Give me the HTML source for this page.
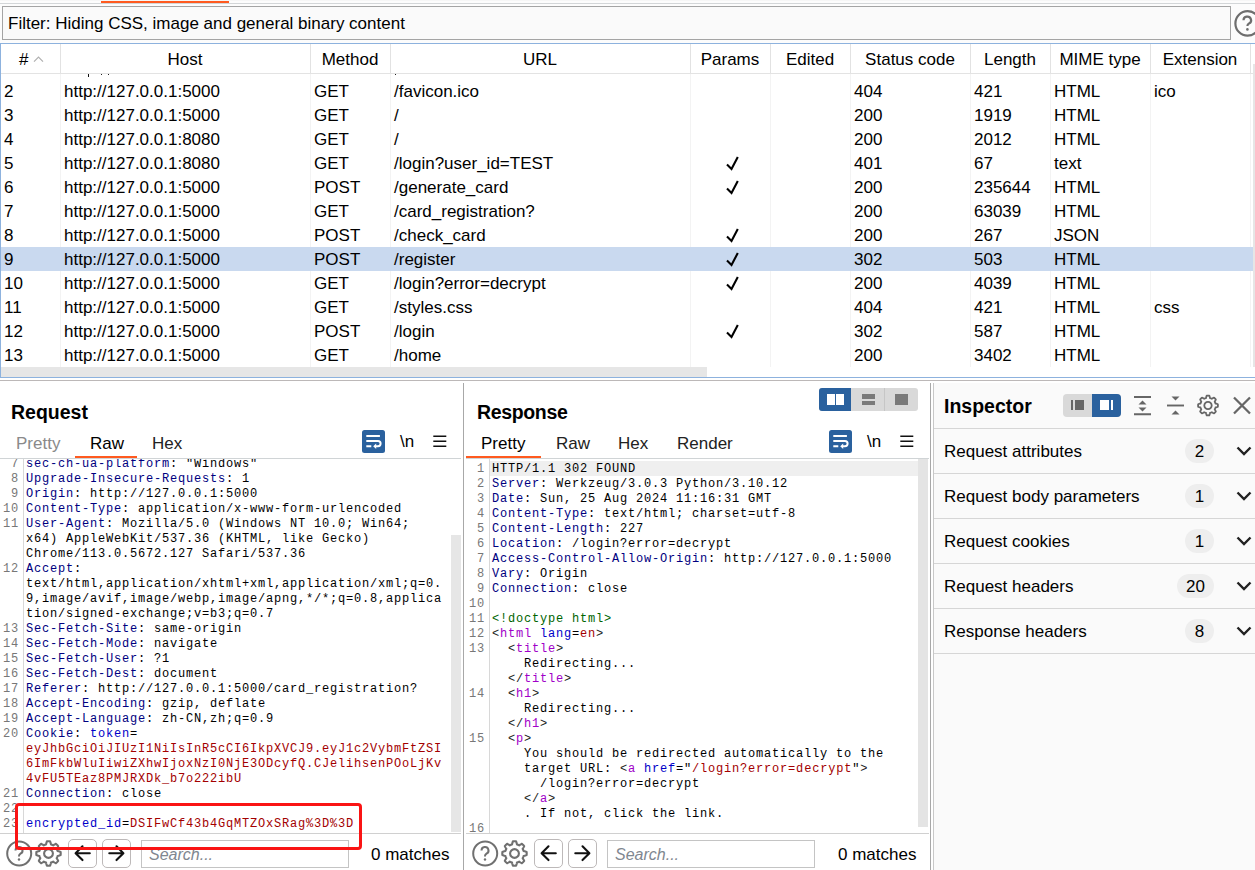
<!DOCTYPE html><html><head><meta charset="utf-8"><style>
*{box-sizing:border-box;margin:0;padding:0}
html,body{width:1255px;height:870px;overflow:hidden;background:#fff}
body{position:relative;font-family:"Liberation Sans",sans-serif;font-size:17px;color:#000}
.a{position:absolute}
.t{position:absolute;white-space:pre;line-height:20px;margin-top:1px}
.b{margin-top:0}
.mono{font-family:"Liberation Mono",monospace;font-size:12px;letter-spacing:0.8px;line-height:15px;white-space:pre}
.hn{color:#000080}
.hv{color:#000}
.ck{color:#0000c8}
.cv{color:#a30000}
.ln{color:#777;text-align:right}
.dt{color:#006400}
.tg{color:#a000c8}
.at{color:#0000c8}
.av{color:#a30000}
.pn{color:#222}
</style></head><body><div class="a" style="left:0;top:0;width:1255px;height:43px;background:#fcfcfc"></div><div class="a" style="left:0;top:0;width:1255px;height:1px;background:#f6f6f6"></div><div class="a" style="left:101px;top:1px;width:128px;height:2px;background:#ff5a1f"></div><div class="a" style="left:0;top:3px;width:1255px;height:1px;background:#d3d6d8"></div><div class="a" style="left:2px;top:6px;width:1229px;height:34px;border:1px solid #a4a4a4;background:#fafafa"></div><div class="t" style="left:8px;top:13px">Filter: Hiding CSS, image and general binary content</div><svg class="a" style="left:1234px;top:10px" width="28" height="28"><circle cx="13.6" cy="13.4" r="12.2" fill="none" stroke="#6e6e6e" stroke-width="2.2"/><path d="M9.5 10.3a3.8 3.6 0 1 1 5.6 3.1c-1.2.7-1.7 1.3-1.7 2.6" fill="none" stroke="#6e6e6e" stroke-width="2.2"/><circle cx="13.4" cy="19.4" r="1.3" fill="#6e6e6e"/></svg><div class="a" style="left:0;top:43px;width:1255px;height:335px;border-top:1px solid #8db2de;border-left:1px solid #8db2de;border-bottom:1px solid #8db2de"></div><div class="a" style="left:1px;top:73px;width:1254px;height:1px;background:#e3e3e3"></div><div class="t" style="left:19px;top:49px">#</div><svg class="a" style="left:33px;top:55px" width="11" height="8"><path d="M1 6.7 L5.5 2.2 L10 6.7" fill="none" stroke="#b0b0b0" stroke-width="1.2"/></svg><div class="a" style="left:60px;top:44px;width:1px;height:29px;background:#e2e2e2"></div><div class="a" style="left:60px;top:74px;width:1px;height:293px;background:#f3f3f3"></div><div class="t" style="left:60px;top:49px;width:250px;text-align:center">Host</div><div class="a" style="left:310px;top:44px;width:1px;height:29px;background:#e2e2e2"></div><div class="a" style="left:310px;top:74px;width:1px;height:293px;background:#f3f3f3"></div><div class="t" style="left:310px;top:49px;width:80px;text-align:center">Method</div><div class="a" style="left:390px;top:44px;width:1px;height:29px;background:#e2e2e2"></div><div class="a" style="left:390px;top:74px;width:1px;height:293px;background:#f3f3f3"></div><div class="t" style="left:390px;top:49px;width:300px;text-align:center">URL</div><div class="a" style="left:690px;top:44px;width:1px;height:29px;background:#e2e2e2"></div><div class="a" style="left:690px;top:74px;width:1px;height:293px;background:#f3f3f3"></div><div class="t" style="left:690px;top:49px;width:80px;text-align:center">Params</div><div class="a" style="left:770px;top:44px;width:1px;height:29px;background:#e2e2e2"></div><div class="a" style="left:770px;top:74px;width:1px;height:293px;background:#f3f3f3"></div><div class="t" style="left:770px;top:49px;width:80px;text-align:center">Edited</div><div class="a" style="left:850px;top:44px;width:1px;height:29px;background:#e2e2e2"></div><div class="a" style="left:850px;top:74px;width:1px;height:293px;background:#f3f3f3"></div><div class="t" style="left:850px;top:49px;width:120px;text-align:center">Status code</div><div class="a" style="left:970px;top:44px;width:1px;height:29px;background:#e2e2e2"></div><div class="a" style="left:970px;top:74px;width:1px;height:293px;background:#f3f3f3"></div><div class="t" style="left:970px;top:49px;width:80px;text-align:center">Length</div><div class="a" style="left:1050px;top:44px;width:1px;height:29px;background:#e2e2e2"></div><div class="a" style="left:1050px;top:74px;width:1px;height:293px;background:#f3f3f3"></div><div class="t" style="left:1050px;top:49px;width:100px;text-align:center">MIME type</div><div class="a" style="left:1150px;top:44px;width:1px;height:29px;background:#e2e2e2"></div><div class="a" style="left:1150px;top:74px;width:1px;height:293px;background:#f3f3f3"></div><div class="t" style="left:1150px;top:49px;width:100px;text-align:center">Extension</div><div class="a" style="left:1250px;top:44px;width:1px;height:29px;background:#e2e2e2"></div><div class="a" style="left:1250px;top:74px;width:1px;height:293px;background:#f3f3f3"></div><div class="a" style="left:1px;top:74px;width:1252px;height:293px;overflow:hidden"><div class="t" style="left:3px;top:-17px">1</div><div class="t" style="left:3px;top:7px">2</div><div class="t" style="left:63px;top:7px">http://127.0.0.1:5000</div><div class="t" style="left:313px;top:7px">GET</div><div class="t" style="left:393px;top:7px">/favicon.ico</div><div class="t" style="left:853px;top:7px">404</div><div class="t" style="left:973px;top:7px">421</div><div class="t" style="left:1053px;top:7px">HTML</div><div class="t" style="left:1153px;top:7px">ico</div><div class="t" style="left:3px;top:31px">3</div><div class="t" style="left:63px;top:31px">http://127.0.0.1:5000</div><div class="t" style="left:313px;top:31px">GET</div><div class="t" style="left:393px;top:31px">/</div><div class="t" style="left:853px;top:31px">200</div><div class="t" style="left:973px;top:31px">1919</div><div class="t" style="left:1053px;top:31px">HTML</div><div class="t" style="left:3px;top:55px">4</div><div class="t" style="left:63px;top:55px">http://127.0.0.1:8080</div><div class="t" style="left:313px;top:55px">GET</div><div class="t" style="left:393px;top:55px">/</div><div class="t" style="left:853px;top:55px">200</div><div class="t" style="left:973px;top:55px">2012</div><div class="t" style="left:1053px;top:55px">HTML</div><div class="t" style="left:3px;top:79px">5</div><div class="t" style="left:63px;top:79px">http://127.0.0.1:8080</div><div class="t" style="left:313px;top:79px">GET</div><div class="t" style="left:393px;top:79px">/login?user_id=TEST</div><svg class="a" style="left:724px;top:81px" width="16" height="17"><path d="M2 9.5 L6.5 14 L12.8 2" fill="none" stroke="#000" stroke-width="2.1"/></svg><div class="t" style="left:853px;top:79px">401</div><div class="t" style="left:973px;top:79px">67</div><div class="t" style="left:1053px;top:79px">text</div><div class="t" style="left:3px;top:103px">6</div><div class="t" style="left:63px;top:103px">http://127.0.0.1:5000</div><div class="t" style="left:313px;top:103px">POST</div><div class="t" style="left:393px;top:103px">/generate_card</div><svg class="a" style="left:724px;top:105px" width="16" height="17"><path d="M2 9.5 L6.5 14 L12.8 2" fill="none" stroke="#000" stroke-width="2.1"/></svg><div class="t" style="left:853px;top:103px">200</div><div class="t" style="left:973px;top:103px">235644</div><div class="t" style="left:1053px;top:103px">HTML</div><div class="t" style="left:3px;top:127px">7</div><div class="t" style="left:63px;top:127px">http://127.0.0.1:5000</div><div class="t" style="left:313px;top:127px">GET</div><div class="t" style="left:393px;top:127px">/card_registration?</div><div class="t" style="left:853px;top:127px">200</div><div class="t" style="left:973px;top:127px">63039</div><div class="t" style="left:1053px;top:127px">HTML</div><div class="t" style="left:3px;top:151px">8</div><div class="t" style="left:63px;top:151px">http://127.0.0.1:5000</div><div class="t" style="left:313px;top:151px">POST</div><div class="t" style="left:393px;top:151px">/check_card</div><svg class="a" style="left:724px;top:153px" width="16" height="17"><path d="M2 9.5 L6.5 14 L12.8 2" fill="none" stroke="#000" stroke-width="2.1"/></svg><div class="t" style="left:853px;top:151px">200</div><div class="t" style="left:973px;top:151px">267</div><div class="t" style="left:1053px;top:151px">JSON</div><div class="a" style="left:0;top:173px;width:1252px;height:24px;background:#c9d9ef"></div><div class="t" style="left:3px;top:175px">9</div><div class="t" style="left:63px;top:175px">http://127.0.0.1:5000</div><div class="t" style="left:313px;top:175px">POST</div><div class="t" style="left:393px;top:175px">/register</div><svg class="a" style="left:724px;top:177px" width="16" height="17"><path d="M2 9.5 L6.5 14 L12.8 2" fill="none" stroke="#000" stroke-width="2.1"/></svg><div class="t" style="left:853px;top:175px">302</div><div class="t" style="left:973px;top:175px">503</div><div class="t" style="left:1053px;top:175px">HTML</div><div class="t" style="left:3px;top:199px">10</div><div class="t" style="left:63px;top:199px">http://127.0.0.1:5000</div><div class="t" style="left:313px;top:199px">GET</div><div class="t" style="left:393px;top:199px">/login?error=decrypt</div><svg class="a" style="left:724px;top:201px" width="16" height="17"><path d="M2 9.5 L6.5 14 L12.8 2" fill="none" stroke="#000" stroke-width="2.1"/></svg><div class="t" style="left:853px;top:199px">200</div><div class="t" style="left:973px;top:199px">4039</div><div class="t" style="left:1053px;top:199px">HTML</div><div class="t" style="left:3px;top:223px">11</div><div class="t" style="left:63px;top:223px">http://127.0.0.1:5000</div><div class="t" style="left:313px;top:223px">GET</div><div class="t" style="left:393px;top:223px">/styles.css</div><div class="t" style="left:853px;top:223px">404</div><div class="t" style="left:973px;top:223px">421</div><div class="t" style="left:1053px;top:223px">HTML</div><div class="t" style="left:1153px;top:223px">css</div><div class="t" style="left:3px;top:247px">12</div><div class="t" style="left:63px;top:247px">http://127.0.0.1:5000</div><div class="t" style="left:313px;top:247px">POST</div><div class="t" style="left:393px;top:247px">/login</div><svg class="a" style="left:724px;top:249px" width="16" height="17"><path d="M2 9.5 L6.5 14 L12.8 2" fill="none" stroke="#000" stroke-width="2.1"/></svg><div class="t" style="left:853px;top:247px">302</div><div class="t" style="left:973px;top:247px">587</div><div class="t" style="left:1053px;top:247px">HTML</div><div class="t" style="left:3px;top:271px">13</div><div class="t" style="left:63px;top:271px">http://127.0.0.1:5000</div><div class="t" style="left:313px;top:271px">GET</div><div class="t" style="left:393px;top:271px">/home</div><div class="t" style="left:853px;top:271px">200</div><div class="t" style="left:973px;top:271px">3402</div><div class="t" style="left:1053px;top:271px">HTML</div></div><div class="a" style="left:87.5px;top:74px;width:1.4px;height:2.5px;background:#111"></div><div class="a" style="left:100.5px;top:74px;width:1.3px;height:1.3px;background:#222"></div><div class="a" style="left:107.5px;top:74px;width:1.3px;height:1.3px;background:#222"></div><div class="a" style="left:394.5px;top:74px;width:1.3px;height:1.3px;background:#222"></div><div class="a" style="left:1px;top:367px;width:1252px;height:10px;background:#fff"></div><div class="a" style="left:1px;top:367px;width:706px;height:10px;background:#e6e6e6"></div><div class="a" style="left:1253px;top:64px;width:2px;height:303px;background:#e6e6e6"></div><div class="a" style="left:0;top:380px;width:1255px;height:1px;background:#bcb8b8"></div><div class="t" style="left:11px;top:400px;font-weight:bold;font-size:19.5px;line-height:22px">Request</div><div class="t" style="left:16px;top:433px;color:#8a8a8a">Pretty</div><div class="t" style="left:90px;top:433px">Raw</div><div class="t" style="left:152px;top:433px;color:#222">Hex</div><div class="a" style="left:75px;top:456px;width:62px;height:2px;background:#ff5a1f"></div><div class="a" style="left:0;top:458px;width:461px;height:1px;background:#d0d4d6"></div><div class="a" style="left:463px;top:383px;width:1px;height:487px;background:#a8a8a8"></div><div class="a" style="left:362px;top:430px;width:23px;height:23px;background:#2a619e;border-radius:2.5px"></div><svg class="a" style="left:362px;top:430px" width="23" height="23"><path d="M4.3 6h13.6M4.3 11H16a2.6 2.6 0 0 1 0 5.2h-2.5M4.3 16.2h5" fill="none" stroke="#fff" stroke-width="2"/><path d="M14.2 13.4L11.2 16.2L14.2 19z" fill="#fff"/></svg><div class="t" style="left:400px;top:431px;font-size:17px">\n</div><svg class="a" style="left:433px;top:434px" width="14" height="14"><path d="M0.3 2.3h13M0.3 7.3h13M0.3 12.2h13" stroke="#111" stroke-width="1.5"/></svg><div class="a" style="left:0px;top:459px;width:461px;height:375px;overflow:hidden"><div class="a" style="left:23px;top:0;width:1px;height:375px;background:#d8d8d8"></div><div class="a mono ln" style="left:0;top:-2px;width:19px">7</div><div class="a mono" style="left:26px;top:-2px"><span class="hn">sec-ch-ua-platform</span>: &quot;Windows&quot;</div><div class="a mono ln" style="left:0;top:13px;width:19px">8</div><div class="a mono" style="left:26px;top:13px"><span class="hn">Upgrade-Insecure-Requests</span>: 1</div><div class="a mono ln" style="left:0;top:28px;width:19px">9</div><div class="a mono" style="left:26px;top:28px"><span class="hn">Origin</span>: http://127.0.0.1:5000</div><div class="a mono ln" style="left:0;top:43px;width:19px">10</div><div class="a mono" style="left:26px;top:43px"><span class="hn">Content-Type</span>: application/x-www-form-urlencoded</div><div class="a mono ln" style="left:0;top:58px;width:19px">11</div><div class="a mono" style="left:26px;top:58px"><span class="hn">User-Agent</span>: Mozilla/5.0 (Windows NT 10.0; Win64;</div><div class="a mono" style="left:26px;top:73px">x64) AppleWebKit/537.36 (KHTML, like Gecko)</div><div class="a mono" style="left:26px;top:88px">Chrome/113.0.5672.127 Safari/537.36</div><div class="a mono ln" style="left:0;top:103px;width:19px">12</div><div class="a mono" style="left:26px;top:103px"><span class="hn">Accept</span>:</div><div class="a mono" style="left:26px;top:118px">text/html,application/xhtml+xml,application/xml;q=0.</div><div class="a mono" style="left:26px;top:133px">9,image/avif,image/webp,image/apng,*/*;q=0.8,applica</div><div class="a mono" style="left:26px;top:148px">tion/signed-exchange;v=b3;q=0.7</div><div class="a mono ln" style="left:0;top:163px;width:19px">13</div><div class="a mono" style="left:26px;top:163px"><span class="hn">Sec-Fetch-Site</span>: same-origin</div><div class="a mono ln" style="left:0;top:178px;width:19px">14</div><div class="a mono" style="left:26px;top:178px"><span class="hn">Sec-Fetch-Mode</span>: navigate</div><div class="a mono ln" style="left:0;top:193px;width:19px">15</div><div class="a mono" style="left:26px;top:193px"><span class="hn">Sec-Fetch-User</span>: ?1</div><div class="a mono ln" style="left:0;top:208px;width:19px">16</div><div class="a mono" style="left:26px;top:208px"><span class="hn">Sec-Fetch-Dest</span>: document</div><div class="a mono ln" style="left:0;top:223px;width:19px">17</div><div class="a mono" style="left:26px;top:223px"><span class="hn">Referer</span>: http://127.0.0.1:5000/card_registration?</div><div class="a mono ln" style="left:0;top:238px;width:19px">18</div><div class="a mono" style="left:26px;top:238px"><span class="hn">Accept-Encoding</span>: gzip, deflate</div><div class="a mono ln" style="left:0;top:253px;width:19px">19</div><div class="a mono" style="left:26px;top:253px"><span class="hn">Accept-Language</span>: zh-CN,zh;q=0.9</div><div class="a mono ln" style="left:0;top:268px;width:19px">20</div><div class="a mono" style="left:26px;top:268px"><span class="hn">Cookie</span>: <span class="ck">token</span>=</div><div class="a mono" style="left:26px;top:283px"><span class="cv">eyJhbGciOiJIUzI1NiIsInR5cCI6IkpXVCJ9.eyJ1c2VybmFtZSI</span></div><div class="a mono" style="left:26px;top:298px"><span class="cv">6ImFkbWluIiwiZXhwIjoxNzI0NjE3ODcyfQ.CJelihsenPOoLjKv</span></div><div class="a mono" style="left:26px;top:313px"><span class="cv">4vFU5TEaz8PMJRXDk_b7o222ibU</span></div><div class="a mono ln" style="left:0;top:328px;width:19px">21</div><div class="a mono" style="left:26px;top:328px"><span class="hn">Connection</span>: close</div><div class="a mono ln" style="left:0;top:343px;width:19px">22</div><div class="a mono" style="left:26px;top:343px"></div><div class="a mono ln" style="left:0;top:358px;width:19px">23</div><div class="a mono" style="left:26px;top:358px"><span class="ck">encrypted_id</span>=<span class="cv">DSIFwCf43b4GqMTZOxSRag%3D%3D</span></div></div><div class="a" style="left:451px;top:535px;width:10px;height:297px;background:#e6e6e6"></div><div class="a" style="left:0;top:833px;width:461px;height:1px;background:#d0d0d0"></div><svg class="a" style="left:6px;top:840px" width="64" height="28"><circle cx="13.2" cy="13.5" r="12" fill="none" stroke="#707070" stroke-width="2"/><path d="M9.5 10.5a3.5 3.5 0 1 1 5 3.2c-1 .6-1.5 1.2-1.5 2.3v.5" fill="none" stroke="#707070" stroke-width="2"/><circle cx="13" cy="19.5" r="1.2" fill="#707070"/><g transform="translate(42.5 13.5)"><path d="M0.00 -12.20 L0.32 -12.20 L0.64 -12.18 L0.96 -12.16 L1.28 -12.13 L1.59 -12.10 L1.82 -11.52 L2.02 -10.91 L2.18 -10.28 L2.32 -9.66 L2.43 -9.08 L2.67 -9.01 L2.90 -8.94 L3.14 -8.86 L3.37 -8.78 L3.60 -8.68 L3.82 -8.59 L4.05 -8.48 L4.27 -8.38 L4.49 -8.26 L4.70 -8.14 L5.19 -8.47 L5.72 -8.81 L6.28 -9.14 L6.86 -9.44 L7.43 -9.68 L7.68 -9.48 L7.92 -9.28 L8.16 -9.07 L8.40 -8.85 L8.63 -8.63 L8.85 -8.40 L9.07 -8.16 L9.28 -7.92 L9.48 -7.68 L9.68 -7.43 L9.44 -6.86 L9.14 -6.28 L8.81 -5.72 L8.47 -5.19 L8.14 -4.70 L8.26 -4.49 L8.38 -4.27 L8.48 -4.05 L8.59 -3.82 L8.68 -3.60 L8.78 -3.37 L8.86 -3.14 L8.94 -2.90 L9.01 -2.67 L9.08 -2.43 L9.66 -2.32 L10.28 -2.18 L10.91 -2.02 L11.52 -1.82 L12.10 -1.59 L12.13 -1.28 L12.16 -0.96 L12.18 -0.64 L12.20 -0.32 L12.20 -0.00 L12.20 0.32 L12.18 0.64 L12.16 0.96 L12.13 1.28 L12.10 1.59 L11.52 1.82 L10.91 2.02 L10.28 2.18 L9.66 2.32 L9.08 2.43 L9.01 2.67 L8.94 2.90 L8.86 3.14 L8.78 3.37 L8.68 3.60 L8.59 3.82 L8.48 4.05 L8.38 4.27 L8.26 4.49 L8.14 4.70 L8.47 5.19 L8.81 5.72 L9.14 6.28 L9.44 6.86 L9.68 7.43 L9.48 7.68 L9.28 7.92 L9.07 8.16 L8.85 8.40 L8.63 8.63 L8.40 8.85 L8.16 9.07 L7.92 9.28 L7.68 9.48 L7.43 9.68 L6.86 9.44 L6.28 9.14 L5.72 8.81 L5.19 8.47 L4.70 8.14 L4.49 8.26 L4.27 8.38 L4.05 8.48 L3.82 8.59 L3.60 8.68 L3.37 8.78 L3.14 8.86 L2.90 8.94 L2.67 9.01 L2.43 9.08 L2.32 9.66 L2.18 10.28 L2.02 10.91 L1.82 11.52 L1.59 12.10 L1.28 12.13 L0.96 12.16 L0.64 12.18 L0.32 12.20 L0.00 12.20 L-0.32 12.20 L-0.64 12.18 L-0.96 12.16 L-1.28 12.13 L-1.59 12.10 L-1.82 11.52 L-2.02 10.91 L-2.18 10.28 L-2.32 9.66 L-2.43 9.08 L-2.67 9.01 L-2.90 8.94 L-3.14 8.86 L-3.37 8.78 L-3.60 8.68 L-3.82 8.59 L-4.05 8.48 L-4.27 8.38 L-4.49 8.26 L-4.70 8.14 L-5.19 8.47 L-5.72 8.81 L-6.28 9.14 L-6.86 9.44 L-7.43 9.68 L-7.68 9.48 L-7.92 9.28 L-8.16 9.07 L-8.40 8.85 L-8.63 8.63 L-8.85 8.40 L-9.07 8.16 L-9.28 7.92 L-9.48 7.68 L-9.68 7.43 L-9.44 6.86 L-9.14 6.28 L-8.81 5.72 L-8.47 5.19 L-8.14 4.70 L-8.26 4.49 L-8.38 4.27 L-8.48 4.05 L-8.59 3.82 L-8.68 3.60 L-8.78 3.37 L-8.86 3.14 L-8.94 2.90 L-9.01 2.67 L-9.08 2.43 L-9.66 2.32 L-10.28 2.18 L-10.91 2.02 L-11.52 1.82 L-12.10 1.59 L-12.13 1.28 L-12.16 0.96 L-12.18 0.64 L-12.20 0.32 L-12.20 0.00 L-12.20 -0.32 L-12.18 -0.64 L-12.16 -0.96 L-12.13 -1.28 L-12.10 -1.59 L-11.52 -1.82 L-10.91 -2.02 L-10.28 -2.18 L-9.66 -2.32 L-9.08 -2.43 L-9.01 -2.67 L-8.94 -2.90 L-8.86 -3.14 L-8.78 -3.37 L-8.68 -3.60 L-8.59 -3.82 L-8.48 -4.05 L-8.38 -4.27 L-8.26 -4.49 L-8.14 -4.70 L-8.47 -5.19 L-8.81 -5.72 L-9.14 -6.28 L-9.44 -6.86 L-9.68 -7.43 L-9.48 -7.68 L-9.28 -7.92 L-9.07 -8.16 L-8.85 -8.40 L-8.63 -8.63 L-8.40 -8.85 L-8.16 -9.07 L-7.92 -9.28 L-7.68 -9.48 L-7.43 -9.68 L-6.86 -9.44 L-6.28 -9.14 L-5.72 -8.81 L-5.19 -8.47 L-4.70 -8.14 L-4.49 -8.26 L-4.27 -8.38 L-4.05 -8.48 L-3.82 -8.59 L-3.60 -8.68 L-3.37 -8.78 L-3.14 -8.86 L-2.90 -8.94 L-2.67 -9.01 L-2.43 -9.08 L-2.32 -9.66 L-2.18 -10.28 L-2.02 -10.91 L-1.82 -11.52 L-1.59 -12.10 L-1.28 -12.13 L-0.96 -12.16 L-0.64 -12.18 L-0.32 -12.20Z" fill="none" stroke="#707070" stroke-width="2.1" stroke-linejoin="round"/><circle r="4.4" fill="none" stroke="#707070" stroke-width="2.1"/></g></svg><div class="a" style="left:68px;top:839px;width:29px;height:29px;border:1px solid #bdb9b9;border-radius:5px;background:#fff"></div><svg class="a" style="left:68px;top:839px" width="29" height="29"><path d="M21.8 14.2H8M14.5 7.3L7.6 14.2L14.5 21.1" fill="none" stroke="#111" stroke-width="2.1" stroke-linecap="round" stroke-linejoin="round"/></svg><div class="a" style="left:102px;top:839px;width:29px;height:29px;border:1px solid #bdb9b9;border-radius:5px;background:#fff"></div><svg class="a" style="left:102px;top:839px" width="29" height="29"><path d="M7.3 14.2H21M14.5 7.3L21.4 14.2L14.5 21.1" fill="none" stroke="#111" stroke-width="2.1" stroke-linecap="round" stroke-linejoin="round"/></svg><div class="a" style="left:141px;top:840px;width:208px;height:28px;border:1px solid #c4c4c4;background:#fff"></div><div class="t" style="left:149px;top:844px;color:#7f8790;font-style:italic;font-size:16px">Search...</div><div class="t" style="left:371px;top:844px">0 matches</div><div class="a" style="left:15px;top:803px;width:347px;height:47px;border:3px solid #fa1414;border-radius:4px"></div><div class="a" style="left:819px;top:388px;width:99px;height:23px;background:#d9d9d9;border-radius:3px"></div><div class="a" style="left:819px;top:388px;width:32px;height:23px;background:#2a619e;border-radius:3px 0 0 3px"></div><div class="a" style="left:884px;top:388px;width:1px;height:23px;background:#c6c6c6"></div><div class="a" style="left:827px;top:394px;width:8px;height:11px;background:#fff"></div><div class="a" style="left:836px;top:394px;width:8px;height:11px;background:#fff"></div><div class="a" style="left:862px;top:394px;width:13px;height:4.5px;background:#7a7a7a"></div><div class="a" style="left:862px;top:400.5px;width:13px;height:4.5px;background:#7a7a7a"></div><div class="a" style="left:895px;top:394px;width:13px;height:11px;background:#7a7a7a"></div><div class="t" style="left:477px;top:400px;font-weight:bold;font-size:19.5px;line-height:22px;letter-spacing:-0.35px">Response</div><div class="t" style="left:481px;top:433px">Pretty</div><div class="t" style="left:556px;top:433px;color:#222">Raw</div><div class="t" style="left:618px;top:433px;color:#222">Hex</div><div class="t" style="left:677px;top:433px;color:#222">Render</div><div class="a" style="left:466px;top:456px;width:75px;height:2px;background:#ff5a1f"></div><div class="a" style="left:466px;top:458px;width:463px;height:1px;background:#d0d4d6"></div><div class="a" style="left:829px;top:430px;width:23px;height:23px;background:#2a619e;border-radius:2.5px"></div><svg class="a" style="left:829px;top:430px" width="23" height="23"><path d="M4.3 6h13.6M4.3 11H16a2.6 2.6 0 0 1 0 5.2h-2.5M4.3 16.2h5" fill="none" stroke="#fff" stroke-width="2"/><path d="M14.2 13.4L11.2 16.2L14.2 19z" fill="#fff"/></svg><div class="t" style="left:867px;top:431px;font-size:17px">\n</div><svg class="a" style="left:900px;top:434px" width="14" height="14"><path d="M0.3 2.3h13M0.3 7.3h13M0.3 12.2h13" stroke="#111" stroke-width="1.5"/></svg><div class="a" style="left:466px;top:459px;width:463px;height:374px;overflow:hidden"><div class="a" style="left:23px;top:0;width:1px;height:374px;background:#d8d8d8"></div><div class="a" style="left:24px;top:2px;width:428px;height:15px;background:#efefef"></div><div class="a mono ln" style="left:0;top:3px;width:19px">1</div><div class="a mono" style="left:26px;top:3px">HTTP/1.1 302 FOUND</div><div class="a mono ln" style="left:0;top:18px;width:19px">2</div><div class="a mono" style="left:26px;top:18px"><span class="hn">Server</span>: Werkzeug/3.0.3 Python/3.10.12</div><div class="a mono ln" style="left:0;top:33px;width:19px">3</div><div class="a mono" style="left:26px;top:33px"><span class="hn">Date</span>: Sun, 25 Aug 2024 11:16:31 GMT</div><div class="a mono ln" style="left:0;top:48px;width:19px">4</div><div class="a mono" style="left:26px;top:48px"><span class="hn">Content-Type</span>: text/html; charset=utf-8</div><div class="a mono ln" style="left:0;top:63px;width:19px">5</div><div class="a mono" style="left:26px;top:63px"><span class="hn">Content-Length</span>: 227</div><div class="a mono ln" style="left:0;top:78px;width:19px">6</div><div class="a mono" style="left:26px;top:78px"><span class="hn">Location</span>: /login?error=decrypt</div><div class="a mono ln" style="left:0;top:93px;width:19px">7</div><div class="a mono" style="left:26px;top:93px"><span class="hn">Access-Control-Allow-Origin</span>: http://127.0.0.1:5000</div><div class="a mono ln" style="left:0;top:108px;width:19px">8</div><div class="a mono" style="left:26px;top:108px"><span class="hn">Vary</span>: Origin</div><div class="a mono ln" style="left:0;top:123px;width:19px">9</div><div class="a mono" style="left:26px;top:123px"><span class="hn">Connection</span>: close</div><div class="a mono ln" style="left:0;top:138px;width:19px">10</div><div class="a mono" style="left:26px;top:138px"></div><div class="a mono ln" style="left:0;top:153px;width:19px">11</div><div class="a mono" style="left:26px;top:153px"><span class="dt">&lt;!doctype html&gt;</span></div><div class="a mono ln" style="left:0;top:168px;width:19px">12</div><div class="a mono" style="left:26px;top:168px"><span class="pn">&lt;</span><span class="tg">html</span> <span class="at">lang</span>=<span class="av">en</span><span class="pn">&gt;</span></div><div class="a mono ln" style="left:0;top:183px;width:19px">13</div><div class="a mono" style="left:26px;top:183px">  <span class="pn">&lt;</span><span class="tg">title</span><span class="pn">&gt;</span></div><div class="a mono" style="left:26px;top:198px">    Redirecting...</div><div class="a mono" style="left:26px;top:213px">  <span class="pn">&lt;/</span><span class="tg">title</span><span class="pn">&gt;</span></div><div class="a mono ln" style="left:0;top:228px;width:19px">14</div><div class="a mono" style="left:26px;top:228px">  <span class="pn">&lt;</span><span class="tg">h1</span><span class="pn">&gt;</span></div><div class="a mono" style="left:26px;top:243px">    Redirecting...</div><div class="a mono" style="left:26px;top:258px">  <span class="pn">&lt;/</span><span class="tg">h1</span><span class="pn">&gt;</span></div><div class="a mono ln" style="left:0;top:273px;width:19px">15</div><div class="a mono" style="left:26px;top:273px">  <span class="pn">&lt;</span><span class="tg">p</span><span class="pn">&gt;</span></div><div class="a mono" style="left:26px;top:288px">    You should be redirected automatically to the</div><div class="a mono" style="left:26px;top:303px">    target URL: <span class="pn">&lt;</span><span class="tg">a</span> <span class="at">href</span>="<span class="av">/login?error=decrypt</span>"<span class="pn">&gt;</span></div><div class="a mono" style="left:26px;top:318px">      /login?error=decrypt</div><div class="a mono" style="left:26px;top:333px">    <span class="pn">&lt;/</span><span class="tg">a</span><span class="pn">&gt;</span></div><div class="a mono" style="left:26px;top:348px">    . If not, click the link.</div><div class="a mono ln" style="left:0;top:363px;width:19px">16</div><div class="a mono" style="left:26px;top:363px"></div></div><div class="a" style="left:918px;top:459px;width:10px;height:368px;background:#e4e4e4"></div><div class="a" style="left:466px;top:833px;width:463px;height:1px;background:#d0d0d0"></div><svg class="a" style="left:472px;top:840px" width="64" height="28"><circle cx="13.2" cy="13.5" r="12" fill="none" stroke="#707070" stroke-width="2"/><path d="M9.5 10.5a3.5 3.5 0 1 1 5 3.2c-1 .6-1.5 1.2-1.5 2.3v.5" fill="none" stroke="#707070" stroke-width="2"/><circle cx="13" cy="19.5" r="1.2" fill="#707070"/><g transform="translate(42.5 13.5)"><path d="M0.00 -12.20 L0.32 -12.20 L0.64 -12.18 L0.96 -12.16 L1.28 -12.13 L1.59 -12.10 L1.82 -11.52 L2.02 -10.91 L2.18 -10.28 L2.32 -9.66 L2.43 -9.08 L2.67 -9.01 L2.90 -8.94 L3.14 -8.86 L3.37 -8.78 L3.60 -8.68 L3.82 -8.59 L4.05 -8.48 L4.27 -8.38 L4.49 -8.26 L4.70 -8.14 L5.19 -8.47 L5.72 -8.81 L6.28 -9.14 L6.86 -9.44 L7.43 -9.68 L7.68 -9.48 L7.92 -9.28 L8.16 -9.07 L8.40 -8.85 L8.63 -8.63 L8.85 -8.40 L9.07 -8.16 L9.28 -7.92 L9.48 -7.68 L9.68 -7.43 L9.44 -6.86 L9.14 -6.28 L8.81 -5.72 L8.47 -5.19 L8.14 -4.70 L8.26 -4.49 L8.38 -4.27 L8.48 -4.05 L8.59 -3.82 L8.68 -3.60 L8.78 -3.37 L8.86 -3.14 L8.94 -2.90 L9.01 -2.67 L9.08 -2.43 L9.66 -2.32 L10.28 -2.18 L10.91 -2.02 L11.52 -1.82 L12.10 -1.59 L12.13 -1.28 L12.16 -0.96 L12.18 -0.64 L12.20 -0.32 L12.20 -0.00 L12.20 0.32 L12.18 0.64 L12.16 0.96 L12.13 1.28 L12.10 1.59 L11.52 1.82 L10.91 2.02 L10.28 2.18 L9.66 2.32 L9.08 2.43 L9.01 2.67 L8.94 2.90 L8.86 3.14 L8.78 3.37 L8.68 3.60 L8.59 3.82 L8.48 4.05 L8.38 4.27 L8.26 4.49 L8.14 4.70 L8.47 5.19 L8.81 5.72 L9.14 6.28 L9.44 6.86 L9.68 7.43 L9.48 7.68 L9.28 7.92 L9.07 8.16 L8.85 8.40 L8.63 8.63 L8.40 8.85 L8.16 9.07 L7.92 9.28 L7.68 9.48 L7.43 9.68 L6.86 9.44 L6.28 9.14 L5.72 8.81 L5.19 8.47 L4.70 8.14 L4.49 8.26 L4.27 8.38 L4.05 8.48 L3.82 8.59 L3.60 8.68 L3.37 8.78 L3.14 8.86 L2.90 8.94 L2.67 9.01 L2.43 9.08 L2.32 9.66 L2.18 10.28 L2.02 10.91 L1.82 11.52 L1.59 12.10 L1.28 12.13 L0.96 12.16 L0.64 12.18 L0.32 12.20 L0.00 12.20 L-0.32 12.20 L-0.64 12.18 L-0.96 12.16 L-1.28 12.13 L-1.59 12.10 L-1.82 11.52 L-2.02 10.91 L-2.18 10.28 L-2.32 9.66 L-2.43 9.08 L-2.67 9.01 L-2.90 8.94 L-3.14 8.86 L-3.37 8.78 L-3.60 8.68 L-3.82 8.59 L-4.05 8.48 L-4.27 8.38 L-4.49 8.26 L-4.70 8.14 L-5.19 8.47 L-5.72 8.81 L-6.28 9.14 L-6.86 9.44 L-7.43 9.68 L-7.68 9.48 L-7.92 9.28 L-8.16 9.07 L-8.40 8.85 L-8.63 8.63 L-8.85 8.40 L-9.07 8.16 L-9.28 7.92 L-9.48 7.68 L-9.68 7.43 L-9.44 6.86 L-9.14 6.28 L-8.81 5.72 L-8.47 5.19 L-8.14 4.70 L-8.26 4.49 L-8.38 4.27 L-8.48 4.05 L-8.59 3.82 L-8.68 3.60 L-8.78 3.37 L-8.86 3.14 L-8.94 2.90 L-9.01 2.67 L-9.08 2.43 L-9.66 2.32 L-10.28 2.18 L-10.91 2.02 L-11.52 1.82 L-12.10 1.59 L-12.13 1.28 L-12.16 0.96 L-12.18 0.64 L-12.20 0.32 L-12.20 0.00 L-12.20 -0.32 L-12.18 -0.64 L-12.16 -0.96 L-12.13 -1.28 L-12.10 -1.59 L-11.52 -1.82 L-10.91 -2.02 L-10.28 -2.18 L-9.66 -2.32 L-9.08 -2.43 L-9.01 -2.67 L-8.94 -2.90 L-8.86 -3.14 L-8.78 -3.37 L-8.68 -3.60 L-8.59 -3.82 L-8.48 -4.05 L-8.38 -4.27 L-8.26 -4.49 L-8.14 -4.70 L-8.47 -5.19 L-8.81 -5.72 L-9.14 -6.28 L-9.44 -6.86 L-9.68 -7.43 L-9.48 -7.68 L-9.28 -7.92 L-9.07 -8.16 L-8.85 -8.40 L-8.63 -8.63 L-8.40 -8.85 L-8.16 -9.07 L-7.92 -9.28 L-7.68 -9.48 L-7.43 -9.68 L-6.86 -9.44 L-6.28 -9.14 L-5.72 -8.81 L-5.19 -8.47 L-4.70 -8.14 L-4.49 -8.26 L-4.27 -8.38 L-4.05 -8.48 L-3.82 -8.59 L-3.60 -8.68 L-3.37 -8.78 L-3.14 -8.86 L-2.90 -8.94 L-2.67 -9.01 L-2.43 -9.08 L-2.32 -9.66 L-2.18 -10.28 L-2.02 -10.91 L-1.82 -11.52 L-1.59 -12.10 L-1.28 -12.13 L-0.96 -12.16 L-0.64 -12.18 L-0.32 -12.20Z" fill="none" stroke="#707070" stroke-width="2.1" stroke-linejoin="round"/><circle r="4.4" fill="none" stroke="#707070" stroke-width="2.1"/></g></svg><div class="a" style="left:534px;top:839px;width:29px;height:29px;border:1px solid #bdb9b9;border-radius:5px;background:#fff"></div><svg class="a" style="left:534px;top:839px" width="29" height="29"><path d="M21.8 14.2H8M14.5 7.3L7.6 14.2L14.5 21.1" fill="none" stroke="#111" stroke-width="2.1" stroke-linecap="round" stroke-linejoin="round"/></svg><div class="a" style="left:568px;top:839px;width:29px;height:29px;border:1px solid #bdb9b9;border-radius:5px;background:#fff"></div><svg class="a" style="left:568px;top:839px" width="29" height="29"><path d="M7.3 14.2H21M14.5 7.3L21.4 14.2L14.5 21.1" fill="none" stroke="#111" stroke-width="2.1" stroke-linecap="round" stroke-linejoin="round"/></svg><div class="a" style="left:607px;top:840px;width:208px;height:28px;border:1px solid #c4c4c4;background:#fff"></div><div class="t" style="left:615px;top:844px;color:#7f8790;font-style:italic;font-size:16px">Search...</div><div class="t" style="left:838px;top:844px">0 matches</div><div class="a" style="left:930px;top:383px;width:1px;height:487px;background:#a8a8a8"></div><div class="a" style="left:933px;top:383px;width:1px;height:487px;background:#c8c8c8"></div><div class="a" style="left:934px;top:383px;width:321px;height:487px;background:#fafafa"></div><div class="t" style="left:944px;top:394px;font-weight:bold;font-size:19.5px;line-height:22px">Inspector</div><div class="a" style="left:1063px;top:394px;width:58px;height:23px;background:#d9d9d9;border-radius:4px"></div><div class="a" style="left:1092px;top:394px;width:29px;height:23px;background:#2a619e;border-radius:0 4px 4px 0"></div><div class="a" style="left:1071px;top:400px;width:2px;height:10px;background:#666"></div><div class="a" style="left:1075px;top:400px;width:9px;height:10px;background:#666"></div><div class="a" style="left:1100px;top:400px;width:9px;height:10px;background:#fff"></div><div class="a" style="left:1111px;top:400px;width:2px;height:10px;background:#fff"></div><svg class="a" style="left:1130px;top:394px" width="125" height="24"><path d="M4 3.1h17M4 20.2h17" stroke="#666" stroke-width="2"/><path d="M8.5 10.5L12.5 6.5L16.5 10.5zM8.5 13.5L12.5 17.5L16.5 13.5z" fill="#666"/><path d="M37 11.5h17" stroke="#666" stroke-width="1.9"/><path d="M41.5 2.5L45.5 6.5L49.5 2.5zM41.5 20.5L45.5 16.5L49.5 20.5z" fill="#666"/><g transform="translate(78 11.5)"><path d="M0.00 -9.90 L0.26 -9.90 L0.52 -9.89 L0.78 -9.87 L1.03 -9.85 L1.29 -9.82 L1.48 -9.36 L1.65 -8.88 L1.78 -8.38 L1.90 -7.90 L1.99 -7.44 L2.19 -7.38 L2.38 -7.32 L2.57 -7.26 L2.76 -7.19 L2.95 -7.11 L3.13 -7.03 L3.31 -6.95 L3.50 -6.86 L3.67 -6.77 L3.85 -6.67 L4.24 -6.92 L4.67 -7.19 L5.11 -7.44 L5.57 -7.67 L6.03 -7.85 L6.23 -7.69 L6.43 -7.53 L6.62 -7.36 L6.81 -7.18 L7.00 -7.00 L7.18 -6.81 L7.36 -6.62 L7.53 -6.43 L7.69 -6.23 L7.85 -6.03 L7.67 -5.57 L7.44 -5.11 L7.19 -4.67 L6.92 -4.24 L6.67 -3.85 L6.77 -3.67 L6.86 -3.50 L6.95 -3.31 L7.03 -3.13 L7.11 -2.95 L7.19 -2.76 L7.26 -2.57 L7.32 -2.38 L7.38 -2.19 L7.44 -1.99 L7.90 -1.90 L8.38 -1.78 L8.88 -1.65 L9.36 -1.48 L9.82 -1.29 L9.85 -1.03 L9.87 -0.78 L9.89 -0.52 L9.90 -0.26 L9.90 -0.00 L9.90 0.26 L9.89 0.52 L9.87 0.78 L9.85 1.03 L9.82 1.29 L9.36 1.48 L8.88 1.65 L8.38 1.78 L7.90 1.90 L7.44 1.99 L7.38 2.19 L7.32 2.38 L7.26 2.57 L7.19 2.76 L7.11 2.95 L7.03 3.13 L6.95 3.31 L6.86 3.50 L6.77 3.67 L6.67 3.85 L6.92 4.24 L7.19 4.67 L7.44 5.11 L7.67 5.57 L7.85 6.03 L7.69 6.23 L7.53 6.43 L7.36 6.62 L7.18 6.81 L7.00 7.00 L6.81 7.18 L6.62 7.36 L6.43 7.53 L6.23 7.69 L6.03 7.85 L5.57 7.67 L5.11 7.44 L4.67 7.19 L4.24 6.92 L3.85 6.67 L3.67 6.77 L3.50 6.86 L3.31 6.95 L3.13 7.03 L2.95 7.11 L2.76 7.19 L2.57 7.26 L2.38 7.32 L2.19 7.38 L1.99 7.44 L1.90 7.90 L1.78 8.38 L1.65 8.88 L1.48 9.36 L1.29 9.82 L1.03 9.85 L0.78 9.87 L0.52 9.89 L0.26 9.90 L0.00 9.90 L-0.26 9.90 L-0.52 9.89 L-0.78 9.87 L-1.03 9.85 L-1.29 9.82 L-1.48 9.36 L-1.65 8.88 L-1.78 8.38 L-1.90 7.90 L-1.99 7.44 L-2.19 7.38 L-2.38 7.32 L-2.57 7.26 L-2.76 7.19 L-2.95 7.11 L-3.13 7.03 L-3.31 6.95 L-3.50 6.86 L-3.67 6.77 L-3.85 6.67 L-4.24 6.92 L-4.67 7.19 L-5.11 7.44 L-5.57 7.67 L-6.03 7.85 L-6.23 7.69 L-6.43 7.53 L-6.62 7.36 L-6.81 7.18 L-7.00 7.00 L-7.18 6.81 L-7.36 6.62 L-7.53 6.43 L-7.69 6.23 L-7.85 6.03 L-7.67 5.57 L-7.44 5.11 L-7.19 4.67 L-6.92 4.24 L-6.67 3.85 L-6.77 3.67 L-6.86 3.50 L-6.95 3.31 L-7.03 3.13 L-7.11 2.95 L-7.19 2.76 L-7.26 2.57 L-7.32 2.38 L-7.38 2.19 L-7.44 1.99 L-7.90 1.90 L-8.38 1.78 L-8.88 1.65 L-9.36 1.48 L-9.82 1.29 L-9.85 1.03 L-9.87 0.78 L-9.89 0.52 L-9.90 0.26 L-9.90 0.00 L-9.90 -0.26 L-9.89 -0.52 L-9.87 -0.78 L-9.85 -1.03 L-9.82 -1.29 L-9.36 -1.48 L-8.88 -1.65 L-8.38 -1.78 L-7.90 -1.90 L-7.44 -1.99 L-7.38 -2.19 L-7.32 -2.38 L-7.26 -2.57 L-7.19 -2.76 L-7.11 -2.95 L-7.03 -3.13 L-6.95 -3.31 L-6.86 -3.50 L-6.77 -3.67 L-6.67 -3.85 L-6.92 -4.24 L-7.19 -4.67 L-7.44 -5.11 L-7.67 -5.57 L-7.85 -6.03 L-7.69 -6.23 L-7.53 -6.43 L-7.36 -6.62 L-7.18 -6.81 L-7.00 -7.00 L-6.81 -7.18 L-6.62 -7.36 L-6.43 -7.53 L-6.23 -7.69 L-6.03 -7.85 L-5.57 -7.67 L-5.11 -7.44 L-4.67 -7.19 L-4.24 -6.92 L-3.85 -6.67 L-3.67 -6.77 L-3.50 -6.86 L-3.31 -6.95 L-3.13 -7.03 L-2.95 -7.11 L-2.76 -7.19 L-2.57 -7.26 L-2.38 -7.32 L-2.19 -7.38 L-1.99 -7.44 L-1.90 -7.90 L-1.78 -8.38 L-1.65 -8.88 L-1.48 -9.36 L-1.29 -9.82 L-1.03 -9.85 L-0.78 -9.87 L-0.52 -9.89 L-0.26 -9.90Z" fill="none" stroke="#666" stroke-width="1.8" stroke-linejoin="round"/><circle r="3.7" fill="none" stroke="#666" stroke-width="1.8"/></g><path d="M104 3.5L120 19.5M120 3.5L104 19.5" stroke="#666" stroke-width="2.3"/></svg><div class="a" style="left:934px;top:428px;width:321px;height:1px;background:#d6d6d6"></div><div class="t" style="left:944px;top:441px">Request attributes</div><div class="a" style="left:1185px;top:439px;width:29px;height:24px;border-radius:12px;background:#eeeeee;text-align:center;line-height:26px;font-size:17px">2</div><svg class="a" style="left:1236px;top:446px" width="16" height="10"><path d="M1.5 1.5L8 8L14.5 1.5" fill="none" stroke="#222" stroke-width="2.4"/></svg><div class="a" style="left:934px;top:473px;width:321px;height:1px;background:#d6d6d6"></div><div class="t" style="left:944px;top:486px">Request body parameters</div><div class="a" style="left:1185px;top:484px;width:29px;height:24px;border-radius:12px;background:#eeeeee;text-align:center;line-height:26px;font-size:17px">1</div><svg class="a" style="left:1236px;top:491px" width="16" height="10"><path d="M1.5 1.5L8 8L14.5 1.5" fill="none" stroke="#222" stroke-width="2.4"/></svg><div class="a" style="left:934px;top:518px;width:321px;height:1px;background:#d6d6d6"></div><div class="t" style="left:944px;top:531px">Request cookies</div><div class="a" style="left:1185px;top:529px;width:29px;height:24px;border-radius:12px;background:#eeeeee;text-align:center;line-height:26px;font-size:17px">1</div><svg class="a" style="left:1236px;top:536px" width="16" height="10"><path d="M1.5 1.5L8 8L14.5 1.5" fill="none" stroke="#222" stroke-width="2.4"/></svg><div class="a" style="left:934px;top:563px;width:321px;height:1px;background:#d6d6d6"></div><div class="t" style="left:944px;top:576px">Request headers</div><div class="a" style="left:1177px;top:574px;width:37px;height:24px;border-radius:12px;background:#eeeeee;text-align:center;line-height:26px;font-size:17px">20</div><svg class="a" style="left:1236px;top:581px" width="16" height="10"><path d="M1.5 1.5L8 8L14.5 1.5" fill="none" stroke="#222" stroke-width="2.4"/></svg><div class="a" style="left:934px;top:608px;width:321px;height:1px;background:#d6d6d6"></div><div class="t" style="left:944px;top:621px">Response headers</div><div class="a" style="left:1185px;top:619px;width:29px;height:24px;border-radius:12px;background:#eeeeee;text-align:center;line-height:26px;font-size:17px">8</div><svg class="a" style="left:1236px;top:626px" width="16" height="10"><path d="M1.5 1.5L8 8L14.5 1.5" fill="none" stroke="#222" stroke-width="2.4"/></svg><div class="a" style="left:934px;top:653px;width:321px;height:1px;background:#d6d6d6"></div></body></html>
